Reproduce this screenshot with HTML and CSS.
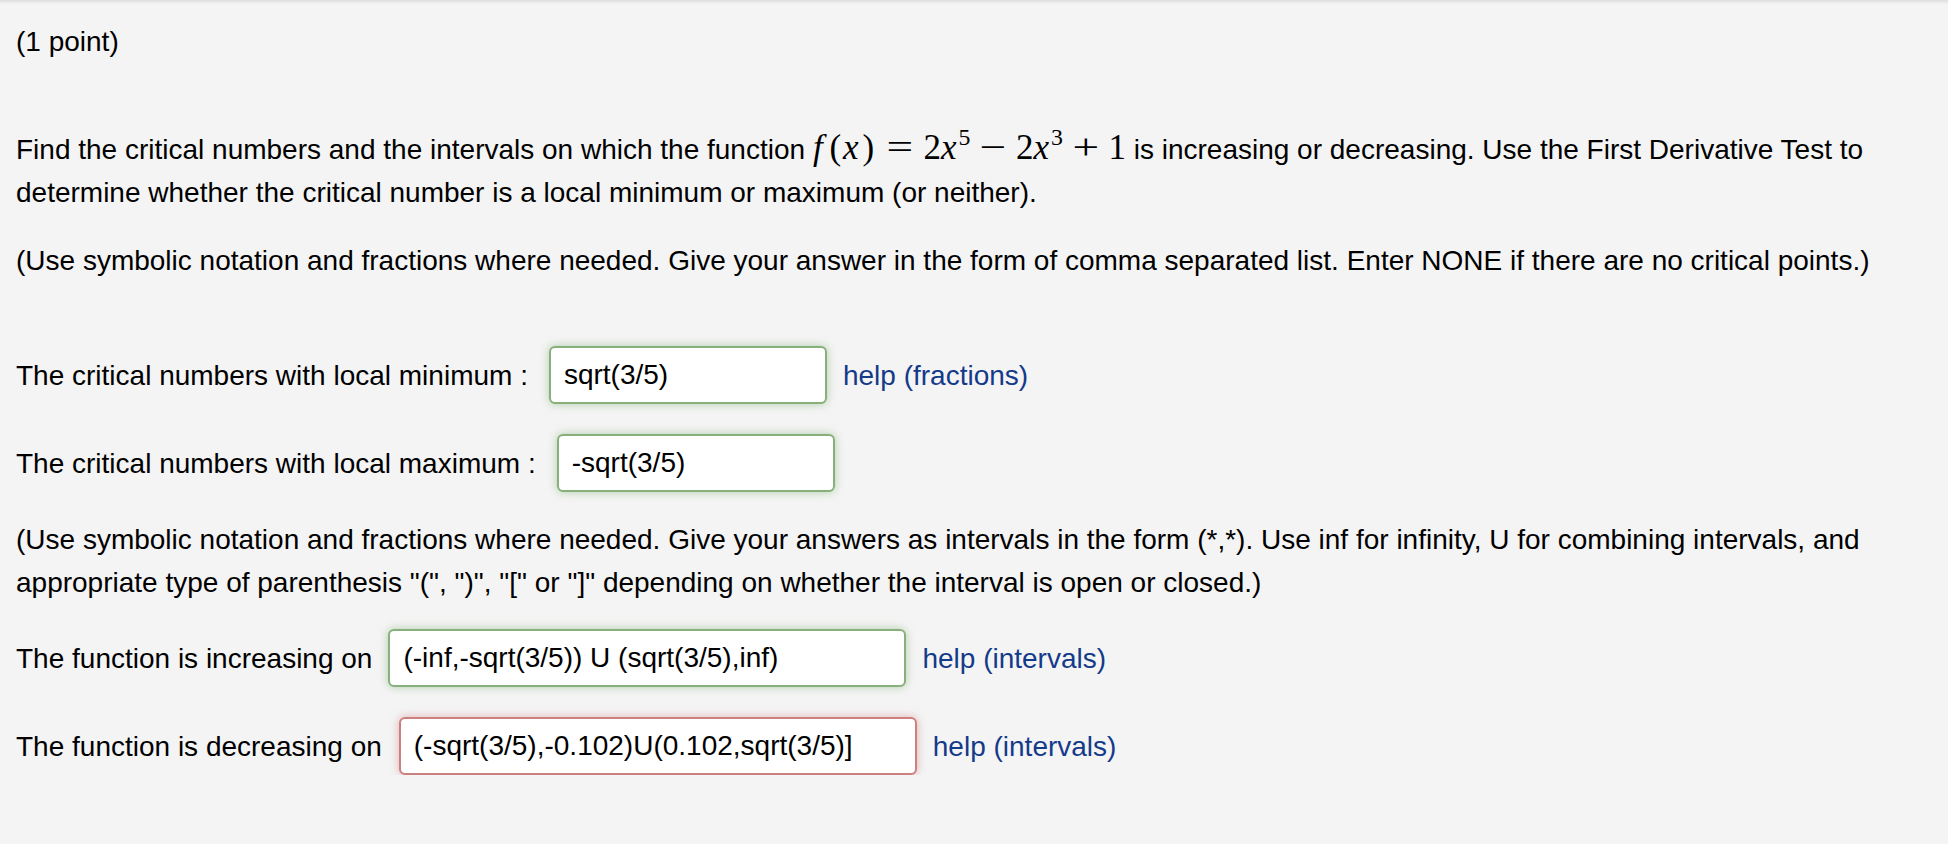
FILE: index.html
```html
<!DOCTYPE html>
<html lang="en">
<head>
<meta charset="utf-8">
<title>Problem</title>
<link rel="stylesheet" href="styles.css">
</head>
<body>
<div class="topbar"></div>
<main class="problem">
  <p class="points">(1 point)</p>
  <p class="question">Find the critical numbers and the intervals on which the function <span class="math"><i class="mi mf">f</i><span class="mp">(</span><i class="mi mx">x</i><span class="mp">)</span><span class="rel"><span class="op">=</span></span><span class="mn">2</span><i class="mi mx">x</i><sup class="msup">5</sup><span class="bin"><span class="op">−</span></span><span class="mn">2</span><i class="mi mx">x</i><sup class="msup">3</sup><span class="bin"><span class="op">+</span></span><span class="mn">1</span></span> is increasing or decreasing. Use the First Derivative Test to determine whether the critical number is a local minimum or maximum (or neither).</p>
  <p class="note">(Use symbolic notation and fractions where needed. Give your answer in the form of comma separated list. Enter NONE if there are no critical points.)</p>

  <div class="row row-min">
    <span class="label">The critical numbers with local minimum :</span>
    <input class="answer short correct" type="text" value="sqrt(3/5)" readonly>
    <a class="help" href="#">help (fractions)</a>
  </div>

  <div class="row row-max">
    <span class="label">The critical numbers with local maximum :</span>
    <input class="answer short correct" type="text" value="-sqrt(3/5)" readonly>
  </div>

  <p class="note note-intervals">(Use symbolic notation and fractions where needed. Give your answers as intervals in the form (*,*). Use inf for infinity, U for combining intervals, and appropriate type of parenthesis "(", ")", "[" or "]" depending on whether the interval is open or closed.)</p>

  <div class="row row-inc">
    <span class="label">The function is increasing on</span>
    <input class="answer long correct" type="text" value="(-inf,-sqrt(3/5)) U (sqrt(3/5),inf)" readonly>
    <a class="help" href="#">help (intervals)</a>
  </div>

  <div class="row row-dec">
    <span class="label">The function is decreasing on</span>
    <input class="answer long incorrect" type="text" value="(-sqrt(3/5),-0.102)U(0.102,sqrt(3/5)]" readonly>
    <a class="help" href="#">help (intervals)</a>
  </div>
</main>
</body>
</html>
```

FILE: styles.css
```css
html, body {
  margin: 0;
  padding: 0;
}

body {
  background: #f4f4f4;
  color: #000;
  font-family: "Liberation Sans", Arial, Helvetica, sans-serif;
  font-size: 28px;
  line-height: 43px;
}

.topbar {
  height: 4px;
  background: linear-gradient(#dcdcdc, #f4f4f4);
}

.problem {
  padding: 0 16px;
}

.problem p {
  margin: 0;
}

.points {
  margin-top: 16px !important;
}

.question {
  margin-top: 63px !important;
}

.note {
  margin-top: 25px !important;
}

.note-intervals {
  margin-top: 26px !important;
}

.math {
  font-family: "Liberation Serif", "Times New Roman", serif;
  font-size: 35px;
  white-space: nowrap;
}

.mi {
  font-style: italic;
}

.mf {
  display: inline-block;
  padding-right: 5px;
}

.mx {
  display: inline-block;
  padding-right: 2px;
}

.mp {
  display: inline-block;
  width: 0.44em;
  text-align: center;
}

.rel {
  display: inline-block;
  width: 1.36em;
  text-align: center;
}

.bin {
  display: inline-block;
  width: 1.3em;
  text-align: center;
}

.op {
  display: inline-block;
  transform: scaleX(1.35);
}

.msup {
  font-size: 0.68em;
  line-height: 0;
  vertical-align: 0.6em;
}

.row {
  display: flex;
  align-items: center;
  height: 58px;
}

.row-min {
  margin-top: 64px;
}

.row-max {
  margin-top: 30px;
}

.row-inc {
  margin-top: 25px;
}

.row-dec {
  margin-top: 30px;
}

.label {
  white-space: nowrap;
}

.answer {
  box-sizing: border-box;
  height: 58px;
  margin: 0 0 0 16px;
  padding: 0 12px 0 13px;
  background: #fff;
  color: #000;
  font-family: "Liberation Sans", Arial, Helvetica, sans-serif;
  font-size: 28px;
  border-radius: 6px;
  outline: none;
}

.row-min .answer,
.row-max .answer {
  margin-left: 21px;
}

.row-dec .answer {
  margin-left: 17px;
}

.short {
  width: 278px;
}

.long {
  width: 518px;
}

.correct {
  border: 2px solid #88b07c;
  box-shadow: 0 0 8px rgba(110, 170, 95, 0.5);
}

.incorrect {
  border: 2px solid #cd8080;
  box-shadow: 0 0 8px rgba(205, 110, 110, 0.5);
}

.help {
  margin-left: 16px;
  color: #143a8a;
  text-decoration: none;
  white-space: nowrap;
}
```
